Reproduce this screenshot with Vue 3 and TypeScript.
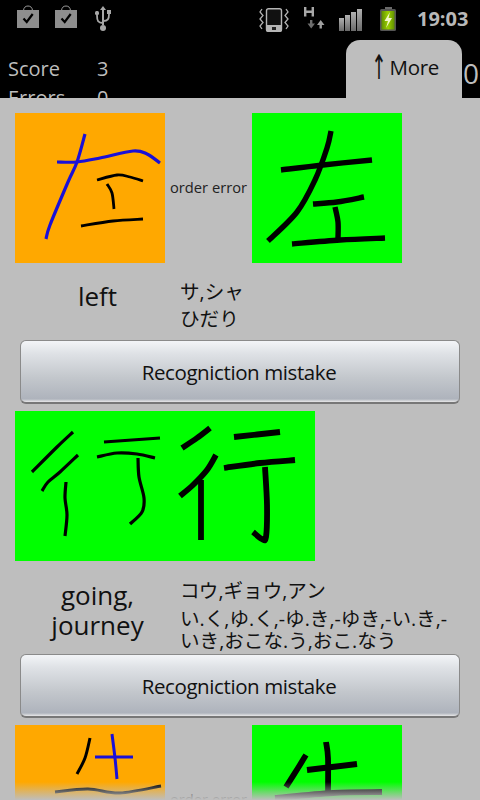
<script setup lang="ts">
type Stroke = { pts: number[]; color?: string; w: number }
type Pic = { bg: string; width: number; strokes: Stroke[] }
type Card = {
  pics: Pic[]
  note?: string
  word?: string
  on?: string
  kun?: string[]
  tall?: boolean
}

const ORANGE = '#ffa800'
const GREEN = '#00ff00'
const BLUE = '#1a10d8'

const cards: Card[] = [
  {
    pics: [
      {
        bg: ORANGE,
        width: 150,
        strokes: [
          { pts: [70, 21, 62, 49, 53, 69, 35, 112, 31, 126], color: BLUE, w: 3.2 },
          { pts: [42, 49, 62, 49, 85, 45, 118, 38, 132, 41, 145, 50], color: BLUE, w: 3.2 },
          { pts: [82, 67, 102, 62, 115, 64, 128, 68], w: 2.8 },
          { pts: [92, 71, 97, 80, 99, 96], w: 2.8 },
          { pts: [66, 113, 98, 108, 128, 106], w: 2.8 }
        ]
      },
      {
        bg: GREEN,
        width: 150,
        strokes: [
          { pts: [79, 18, 75, 35, 63, 67, 45, 99, 16, 128], w: 5.4 },
          { pts: [29, 57, 71, 52, 120, 47], w: 5.4 },
          { pts: [61, 91, 85, 89, 112, 84], w: 5.4 },
          { pts: [83, 94, 86, 109, 86, 125], w: 5.4 },
          { pts: [40, 131, 88, 127, 133, 125], w: 5.4 }
        ]
      }
    ],
    note: 'order error',
    word: 'left',
    on: 'サ,シャ',
    kun: ['ひだり']
  },
  {
    pics: [
      {
        bg: GREEN,
        width: 300,
        strokes: [
          { pts: [58, 21, 42, 36, 17, 61], w: 3.2 },
          { pts: [63, 44, 45, 61, 33, 71, 27, 80], w: 3.2 },
          { pts: [51, 71, 50, 87, 52, 104, 50, 125], w: 3.2 },
          { pts: [89, 31, 145, 27], w: 3.2 },
          { pts: [82, 46, 102, 42, 122, 43, 140, 47], w: 3.2 },
          { pts: [123, 47, 124, 66, 129, 87, 127, 101, 115, 113], w: 3.2 },
          { pts: [195, 17, 182, 27, 167, 37], w: 5.8 },
          { pts: [201, 44, 192, 59, 178, 74, 165, 85], w: 5.8 },
          { pts: [186, 69, 186, 129], w: 5.8 },
          { pts: [219, 26, 265, 21], w: 5.8 },
          { pts: [209, 57, 245, 52, 280, 49], w: 5.8 },
          { pts: [250, 56, 252, 94, 251, 126, 247, 128, 238, 121], w: 5.8 }
        ]
      }
    ],
    word: 'going, journey',
    on: 'コウ,ギョウ,アン',
    kun: ['い.く,ゆ.く,-ゆ.き,-ゆき,-い.き,-', 'いき,おこな.う,おこ.なう'],
    tall: true
  },
  {
    pics: [
      {
        bg: ORANGE,
        width: 150,
        strokes: [
          { pts: [75, 13, 70, 33, 62, 49], w: 3 },
          { pts: [97, 9, 100, 33, 102, 54], color: BLUE, w: 3 },
          { pts: [80, 32, 118, 32], color: BLUE, w: 3 },
          { pts: [40, 67, 73, 64, 105, 68, 146, 61], w: 3 }
        ]
      },
      {
        bg: GREEN,
        width: 150,
        strokes: [
          { pts: [54, 30, 46, 43, 34, 62], w: 5.8 },
          { pts: [74, 17, 76, 33, 76, 70], w: 5.8 },
          { pts: [55, 45, 105, 39], w: 5.8 },
          { pts: [23, 73, 81, 68, 130, 67], w: 5.8 }
        ]
      }
    ],
    note: 'order error'
  }
]

function toPath(p: number[]): string {
  const x = (i: number) => p[Math.max(0, Math.min(p.length / 2 - 1, i)) * 2]
  const y = (i: number) => p[Math.max(0, Math.min(p.length / 2 - 1, i)) * 2 + 1]
  let d = `M${x(0)} ${y(0)}`
  for (let i = 0; i < p.length / 2 - 1; i++) {
    const c1x = x(i) + (x(i + 1) - x(i - 1)) / 6
    const c1y = y(i) + (y(i + 1) - y(i - 1)) / 6
    const c2x = x(i + 1) - (x(i + 2) - x(i)) / 6
    const c2y = y(i + 1) - (y(i + 2) - y(i)) / 6
    d += `C${c1x} ${c1y} ${c2x} ${c2y} ${x(i + 1)} ${y(i + 1)}`
  }
  return d
}
</script>

<template>
  <div class="screen">
    <div class="status">
      <svg class="ic bag" width="22" height="24" viewBox="0 0 22 24">
        <path d="M6.500 6C6.500 2.500 8.500 1 11 1s4.500 1.500 4.500 5" fill="none" stroke="#9a9a9a" stroke-width="1" />
        <rect x="0" y="5" width="22" height="18" fill="#8e8e8e" />
        <path d="M6.500 13.500l3.200 3.500 6-8" fill="none" stroke="#000" stroke-width="2.200" />
      </svg>
      <svg class="ic bag two" width="22" height="24" viewBox="0 0 22 24">
        <path d="M6.500 6C6.500 2.500 8.500 1 11 1s4.500 1.500 4.500 5" fill="none" stroke="#9a9a9a" stroke-width="1" />
        <rect x="0" y="5" width="22" height="18" fill="#8e8e8e" />
        <path d="M6.500 13.500l3.200 3.500 6-8" fill="none" stroke="#000" stroke-width="2.200" />
      </svg>
      <svg class="ic usb" width="16" height="26" viewBox="0 0 16 26">
        <path d="M8 0l3 4H9v15H7V4H5z" fill="#a8a8a8" />
        <circle cx="8" cy="22" r="3" fill="#a8a8a8" />
        <path d="M8 17c-5 0-6-2-6-8M8 15c5 0 6-2 6-7" fill="none" stroke="#a8a8a8" stroke-width="1.800" />
        <rect x="0" y="5" width="4" height="4" rx="1.500" fill="#a8a8a8" />
        <rect x="12" y="4" width="4" height="4" fill="#a8a8a8" />
      </svg>
      <svg class="ic vib" width="30" height="24" viewBox="0 0 30 24">
        <rect x="7.500" y="0.700" width="15" height="22.600" rx="2" fill="#111" stroke="#b5b5b5" stroke-width="1.400" />
        <path d="M7 17h16v5a2 2 0 0 1-2 2H9a2 2 0 0 1-2-2z" fill="#b5b5b5" />
        <rect x="13" y="19" width="4" height="3" fill="#222" />
        <path d="M3 1L1 4l3 3.500-3 3.500 3 3.500-3 3.500 2 3M27 1l2 3-3 3.500 3 3.500-3 3.500 3 3.500-2 3" fill="none" stroke="#b0b0b0" stroke-width="1.300" />
      </svg>
      <svg class="ic net" width="22" height="22" viewBox="0 0 22 22">
        <path d="M2.200 0v9.500M9.800 0v9.500M2.200 4.700h7.600" fill="none" stroke="#a8a8a8" stroke-width="2.400" />
        <path d="M7 13h2.400v3.500H12L8.200 21.500 4.500 16.500H7z" fill="#6e6e6e" />
        <path d="M16.500 21.500h2.400V18h2.600l-3.800-5-3.700 5h2.500z" fill="#a0a0a0" />
      </svg>
      <svg class="ic sig" width="24" height="22" viewBox="0 0 24 22">
        <defs>
          <linearGradient id="sigfill" x1="0" y1="0" x2="0" y2="1">
            <stop offset="0" stop-color="#b0b0b0" />
            <stop offset="1" stop-color="#6a6a6a" />
          </linearGradient>
        </defs>
        <rect x="0" y="9" width="5" height="13" fill="url(#sigfill)" />
        <rect x="6" y="6" width="5" height="16" fill="url(#sigfill)" />
        <rect x="12" y="3" width="5" height="19" fill="url(#sigfill)" />
        <rect x="18" y="0" width="5" height="22" fill="url(#sigfill)" />
      </svg>
      <svg class="ic bat" width="16" height="24" viewBox="0 0 16 24">
        <defs>
          <linearGradient id="batfill" x1="0" y1="0" x2="1" y2="0">
            <stop offset="0" stop-color="#5f8f00" />
            <stop offset="0.500" stop-color="#9bd000" />
            <stop offset="1" stop-color="#5f8f00" />
          </linearGradient>
        </defs>
        <rect x="5" y="0" width="7" height="3" fill="#6a6a6a" />
        <rect x="0" y="2" width="16" height="22" rx="1.500" fill="#555" />
        <rect x="1.500" y="4" width="13" height="18.500" fill="url(#batfill)" />
        <path d="M10 5L4.500 14H8L6 21l6-10H8.500z" fill="#f2f7c8" />
      </svg>
      <span class="time">19:03</span>
    </div>

    <div class="head">
      <div class="scores">
        <span>Score</span><span>3</span>
        <span>Errors</span><span>0</span>
      </div>
      <span class="extra">0</span>
      <div class="more"><span class="arrow">↑</span><span>More</span></div>
    </div>

    <div class="panel">
      <section v-for="(card, i) in cards" :key="i" class="card">
        <div class="pics">
          <template v-for="(pic, j) in card.pics" :key="j">
            <svg
              class="pic"
              :width="pic.width"
              height="150"
              :viewBox="`0 0 ${pic.width} 150`"
              :style="{ background: pic.bg }"
            >
              <path
                v-for="(s, k) in pic.strokes"
                :key="k"
                :d="toPath(s.pts)"
                fill="none"
                :stroke="s.color || '#000'"
                :stroke-width="s.w"
                stroke-linejoin="round"
              />
            </svg>
            <span v-if="j === 0 && card.note" class="note">{{ card.note }}</span>
          </template>
        </div>
        <template v-if="card.word">
          <div class="details" :class="{ tall: card.tall }">
            <div class="word">{{ card.word }}</div>
            <div class="reads">
              <div class="on">{{ card.on }}</div>
              <div class="kun">
                <div v-for="line in card.kun" :key="line">{{ line }}</div>
              </div>
            </div>
          </div>
          <button class="btn" type="button">Recogniction mistake</button>
        </template>
      </section>
      <div class="fade"></div>
    </div>
  </div>
</template>

<style scoped>
.screen {
  width: 480px;
  height: 800px;
  background: #000;
  overflow: hidden;
  display: flex;
  flex-direction: column;
  font-family: "Open Sans", "Noto Sans CJK JP", sans-serif;
}
.status {
  height: 38px;
  flex: none;
  display: flex;
  align-items: flex-start;
  color: #bdbdbd;
}
.ic { display: block; flex: none; }
.bag { margin: 5px 0 0 17px; }
.bag.two { margin-left: 16px; }
.usb { margin: 6px 0 0 18px; }
.vib { margin: 8px 0 0 148px; }
.net { margin: 7px 0 0 14px; }
.sig { margin: 9px 0 0 14px; }
.bat { margin: 7px 0 0 17px; }
.time {
  margin: 5px 0 0 21px;
  font-size: 20px;
  line-height: 27px;
  font-weight: 700;
  color: #b8b8b8;
}
.head {
  position: relative;
  height: 60px;
  flex: none;
  overflow: hidden;
  display: flex;
  justify-content: space-between;
  color: #bdbdbd;
}
.scores {
  display: grid;
  grid-template-columns: 89px auto;
  grid-auto-rows: 29px;
  padding: 16px 0 0 8px;
  font-size: 20px;
  line-height: 29px;
}
.extra {
  font-size: 28px;
  line-height: 38px;
  margin: 16px 1px 0 0;
}
.more {
  position: absolute;
  left: 346px;
  top: 2px;
  width: 116px;
  height: 58px;
  box-sizing: border-box;
  padding: 11px 1px 0 0;
  display: flex;
  justify-content: center;
  align-items: flex-start;
  background: #bebebe;
  border-radius: 14px 14px 0 0;
  color: #111;
  font-size: 20.500px;
  letter-spacing: -0.300px;
  line-height: 32px;
}
.arrow {
  font-family: "DejaVu Sans", sans-serif;
  font-size: 26px;
  transform: scaleX(0.7) scaleY(1.3);
}
.panel {
  position: relative;
  flex: 1;
  min-height: 0;
  overflow: hidden;
  background: #bebebe;
  padding: 15px 0 0;
  color: #111;
}
.card { display: flex; flex-direction: column; }
.pics {
  display: flex;
  align-items: center;
  padding-left: 15px;
}
.pic { display: block; flex: none; }
.note {
  width: 87px;
  flex: none;
  text-align: center;
  font-size: 14.700px;
  line-height: 20px;
  white-space: nowrap;
  color: #222;
  margin-top: -3px;
}
.details {
  display: flex;
  min-height: 77px;
  padding-left: 30px;
  box-sizing: border-box;
}
.word {
  width: 135px;
  flex: none;
  margin-top: 18px;
  text-align: center;
  font-size: 26px;
  line-height: 30px;
  padding: 0 15px;
  box-sizing: border-box;
}
.tall .word { margin-top: 19px; }
.reads {
  margin: 18px 0 0 15px;
  padding-bottom: 3px;
  font-size: 19.600px;
  line-height: 22px;
  white-space: nowrap;
}
.tall .reads { margin-top: 19px; padding-bottom: 2px; }
.kun { margin-top: 5px; }
.tall .kun { margin-top: 6px; }
.btn {
  display: block;
  width: 440px;
  height: 64px;
  margin: 0 0 7px 20px;
  padding: 0 2px 0 0;
  box-sizing: border-box;
  border: 1px solid #8a8a8a;
  border-bottom: 2px solid #777;
  border-radius: 6px;
  background: linear-gradient(#f3f5f8 0%, #dfe2e6 20%, #c3c7cc 60%, #aeb3bc 95%, #e8e8e8 100%);
  color: #111;
  font-family: inherit;
  font-size: 20.500px;
  letter-spacing: -0.400px;
}
.fade {
  position: absolute;
  left: 0;
  right: 0;
  bottom: 0;
  height: 18px;
  background: linear-gradient(rgba(190, 190, 190, 0), #bebebe);
}
</style>
